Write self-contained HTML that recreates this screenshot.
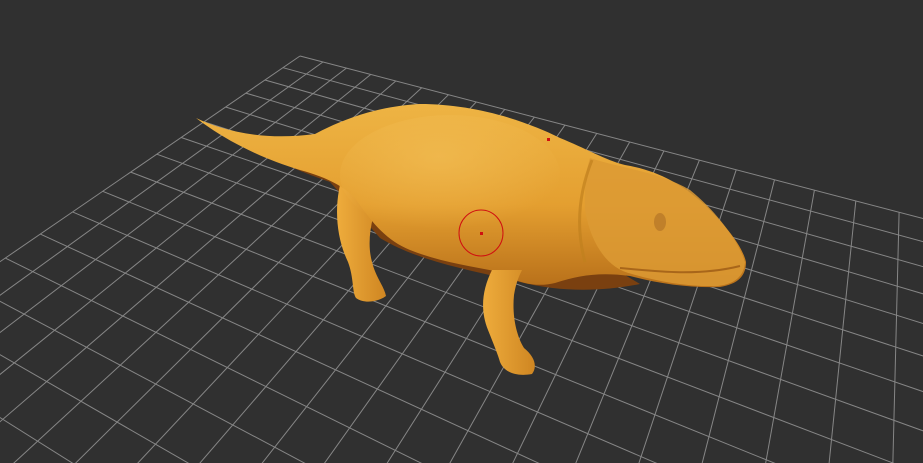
<!DOCTYPE html>
<html><head><meta charset="utf-8"><style>
html,body{margin:0;padding:0;background:#303030;width:923px;height:463px;overflow:hidden}
svg{display:block;position:absolute;left:0;top:0;overflow:hidden}
</style></head><body>
<svg id="s" width="923" height="463" viewBox="0 0 923 463" xmlns="http://www.w3.org/2000/svg">
<defs>
<linearGradient id="body" x1="0" y1="0" x2="0" y2="1">
<stop offset="0" stop-color="#eeb444"/><stop offset="0.55" stop-color="#e49f30"/><stop offset="1" stop-color="#b8701a"/>
</linearGradient>
<linearGradient id="leg" x1="0" y1="0" x2="1" y2="0">
<stop offset="0" stop-color="#eeac3c"/><stop offset="1" stop-color="#cf8622"/>
</linearGradient>
<radialGradient id="hl" cx="0.45" cy="0.35" r="0.6">
<stop offset="0" stop-color="#f3c058" stop-opacity="0.6"/><stop offset="1" stop-color="#f3c058" stop-opacity="0"/>
</radialGradient>
</defs>
<g id="grid" stroke="#868686" stroke-width="1" fill="none"></g>
<path d="M210,128 C250,150 290,168 330,182 L380,238 C420,262 470,270 520,282 C560,292 600,292 640,284 L600,260 L330,170 Z" fill="#7a4010"/>
<path d="M345,168 C333,200 335,235 348,262 C354,278 352,292 356,298 C364,304 378,302 386,296 C384,286 376,278 372,262 C366,240 372,215 382,190 Z" fill="url(#leg)"/>
<path d="M196,118 C230,134 270,140 315,134 C345,118 380,106 420,104 C470,104 520,118 560,138 C585,148 605,160 625,165 C655,170 680,182 705,205 C725,225 742,245 746,262 C746,276 738,284 720,287 C690,288 660,284 630,276 C600,272 580,275 555,283 C535,288 515,282 500,272 C470,266 440,262 410,250 C385,240 370,220 355,198 C345,188 330,178 300,170 C260,158 225,140 196,118 Z" fill="url(#body)"/>
<ellipse cx="450" cy="175" rx="110" ry="60" fill="url(#hl)"/>
<path d="M590,158 C620,168 660,172 690,190 C715,210 738,240 745,262 C744,276 735,284 718,286 C690,287 660,282 632,274 C605,268 590,240 585,210 C584,190 586,170 590,158 Z" fill="#dc9a34" opacity="0.85"/>
<path d="M620,268 C660,272 700,276 740,266" stroke="#a8661a" stroke-width="2" fill="none"/>
<ellipse cx="660" cy="222" rx="6" ry="9" fill="#c0802a"/>
<path d="M592,160 C580,190 575,225 585,262" stroke="#c0801e" stroke-width="3" fill="none" opacity="0.7"/>
<path d="M492,270 C482,290 480,310 488,330 C494,345 498,355 500,362 C504,372 516,377 532,374 C538,366 534,356 524,348 C516,335 512,315 514,295 C516,282 520,274 522,270 Z" fill="url(#leg)"/>
<ellipse cx="481" cy="233" rx="22" ry="23" fill="none" stroke="#d01010" stroke-width="1"/>
<rect x="480" y="232" width="3" height="3" fill="#d01010"/>
<rect x="547" y="138" width="3" height="3" fill="#d01010"/>
</svg>
<script>
(function(){
var H=[[18.0,-24.7,300],[5.03,9.86,56],[-0.01505,-0.02704,1]];
function P(u,v){var w=H[2][0]*u+H[2][1]*v+1;return [(H[0][0]*u+H[0][1]*v+H[0][2])/w,(H[1][0]*u+H[1][1]*v+H[1][2])/w];}
var g=document.getElementById('grid'),out='';
function seg(a,b){out+='<line x1="'+a[0].toFixed(1)+'" y1="'+a[1].toFixed(1)+'" x2="'+b[0].toFixed(1)+'" y2="'+b[1].toFixed(1)+'"/>';}
var WMIN=0.12;
for(var u=0;u<=45;u++){var vmax=(1-WMIN+H[2][0]*u)/(-H[2][1]);if(vmax<=0)continue;vmax=Math.min(vmax,40);seg(P(u,0),P(u,vmax));}
for(var v=0;v<=40;v++){var umax=(1-WMIN+H[2][1]*v)/(-H[2][0]);if(umax<=0)continue;umax=Math.min(umax,45);seg(P(0,v),P(umax,v));}
g.innerHTML=out;
})();
</script>
</body></html>
